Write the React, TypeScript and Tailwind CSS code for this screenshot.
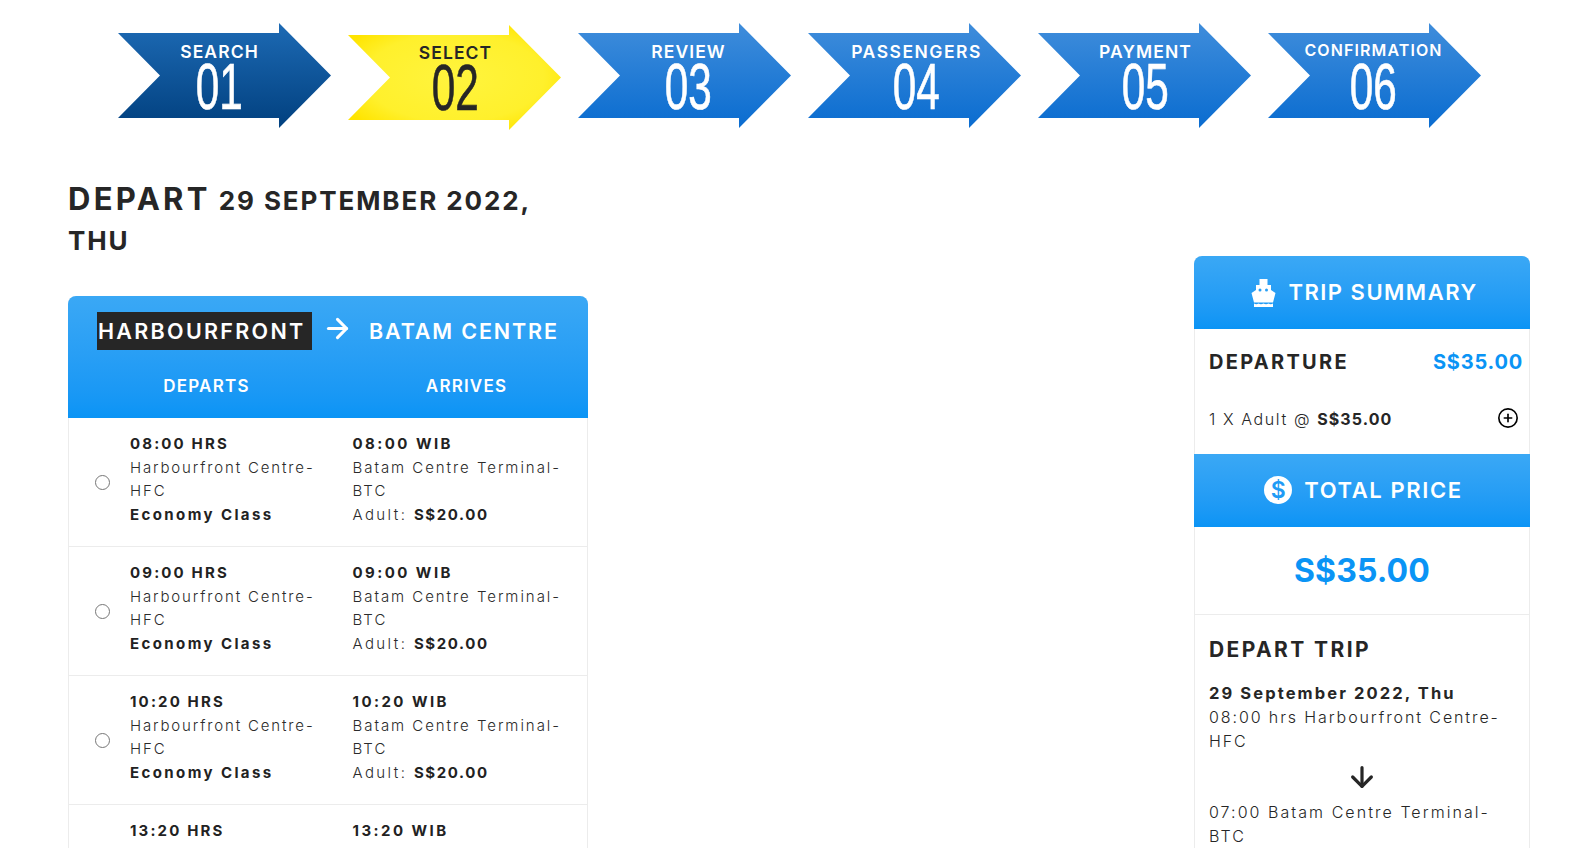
import { ArrowRight, ArrowDown, CirclePlus } from "lucide-react";

const steps = [
  { label: "SEARCH", num: "01", kind: "done", pos: "left-0 right-[10px]", size: "text-[17.5px] tracking-[1.1px]" },
  { label: "SELECT", num: "02", kind: "active", pos: "left-[2px] right-0 -mt-[1px]", size: "text-[17.5px] tracking-[1.1px]" },
  { label: "REVIEW", num: "03", kind: "todo", pos: "left-[8px] right-0", size: "text-[17.5px] tracking-[1.1px]" },
  { label: "PASSENGERS", num: "04", kind: "todo", pos: "left-[4px] right-0", size: "text-[17.5px] tracking-[1.5px]" },
  { label: "PAYMENT", num: "05", kind: "todo", pos: "left-[2px] right-0", size: "text-[17.5px] tracking-[1.1px]" },
  { label: "CONFIRMATION", num: "06", kind: "todo", pos: "left-0 right-[2px]", size: "text-[16px] tracking-[1.1px] -mt-[2px] mb-[2px]" },
];

const rows = ["08:00", "09:00", "10:20", "13:20"];

function Arrow({ label, num, kind, id, pos, size }: { label: string; num: string; kind: string; id: number; pos: string; size: string }) {
  const dark = kind === "active";
  return (
    <div className={`relative w-[213px] h-[105px] shrink-0 ${dark ? "mt-[2px]" : ""}`}>
      <svg viewBox="0 0 213 105" className="block w-[213px] h-[105px]">
        <defs>
          <linearGradient id={`g${id}`} x1="0" y1="0" x2="0" y2="1">
            {kind === "done" && <stop offset="0" stopColor="#1d6ab4" />}
            {kind === "done" && <stop offset="1" stopColor="#01407f" />}
            {kind === "todo" && <stop offset="0" stopColor="#3f8ddb" />}
            {kind === "todo" && <stop offset="1" stopColor="#0a6cd0" />}
          </linearGradient>
          <radialGradient id={`y${id}`} cx="0.5" cy="0.5" r="0.6">
            <stop offset="0" stopColor="#fff43e" />
            <stop offset="0.7" stopColor="#fff02c" />
            <stop offset="1" stopColor="#ffe400" />
          </radialGradient>
        </defs>
        <polygon
          points="0,10 161,10 161,0 213,52.5 161,105 161,95 0,95 42,52.5"
          fill={dark ? `url(#y${id})` : `url(#g${id})`}
        />
      </svg>
      <div className={`absolute top-[19px] flex flex-col items-center ${pos} ${dark ? "text-[#262626]" : "text-white"}`}>
        <span className={`font-semibold leading-[20px] whitespace-nowrap ${size}`}>{label}</span>
        <span className="font-['Liberation_Sans',sans-serif] text-[65px] leading-[50px] scale-x-[0.65] [-webkit-text-stroke:0.7px_currentColor]">{num}</span>
      </div>
    </div>
  );
}

function Row({ time }: { time: string }) {
  return (
    <div className="flex border-b border-[#ececec] h-[129px] pt-[14px] items-start">
      <div className="w-[61px] h-[101px] flex items-center justify-center pl-[6px] shrink-0">
        <input type="radio" name="dep" className="w-[15px] h-[15px] m-0" />
      </div>
      <div className="w-[222.5px] shrink-0 text-[15px] leading-[23.5px] tracking-[1.85px] text-[#2b2b2b] font-light">
        <div className="font-bold text-[#222] tracking-[2.15px]">{time} HRS</div>
        <div>Harbourfront Centre-<br />HFC</div>
        <div className="font-bold text-[#222] tracking-[2.4px]">Economy Class</div>
      </div>
      <div className="flex-1 text-[15px] leading-[23.5px] tracking-[1.95px] text-[#2b2b2b] font-light">
        <div className="font-bold text-[#222] tracking-[2.45px]">{time} WIB</div>
        <div>Batam Centre Terminal-<br />BTC</div>
        <div className="tracking-[2.4px]">Adult: <span className="font-bold text-[#222] tracking-[1.6px]">S$20.00</span></div>
      </div>
    </div>
  );
}

export default function App() {
  return (
    <div className="h-screen overflow-hidden bg-white font-['Inter',sans-serif] text-[#262626]">
      <div className="flex gap-[17px] pl-[118px] pt-[23px]">
        {steps.map((s, i) => (
          <Arrow key={s.label} id={i} {...s} />
        ))}
      </div>
      <div className="flex justify-between pl-[68px] pr-[55px] mt-[10px]">
        <div className="w-[520px] shrink-0">
          <h1 className="mt-[39px] w-[480px] font-bold text-[#262626] text-[26px] leading-[39.5px] tracking-[1.9px]">
            <span className="text-[31px] tracking-[3.3px]">DEPART</span> 29 SEPTEMBER 2022, THU
          </h1>
          <div className="mt-[36px] border-x border-[#ececec] rounded-t-lg">
            <div className="-mx-px rounded-t-lg bg-gradient-to-b from-[#3aa8f5] to-[#0a94f5] h-[122px] text-white">
              <div className="flex items-center pt-[16px] pl-[29px]">
                <span className="bg-[#262626] h-[38px] w-[215px] flex items-center pl-[1px] text-[21.5px] font-semibold tracking-[2.3px]">HARBOURFRONT</span>
                <ArrowRight className="ml-[10px] w-[31px] h-[31px] -mt-[5px]" strokeWidth={2.4} />
                <span className="ml-[16px] text-[21.5px] font-semibold tracking-[1.85px]">BATAM CENTRE</span>
              </div>
              <div className="flex mt-[24px] text-[17px] font-semibold tracking-[1.2px]">
                <span className="w-[277px] text-center">DEPARTS</span>
                <span className="w-[243px] text-center">ARRIVES</span>
              </div>
            </div>
            {rows.map((t) => (
              <Row key={t} time={t} />
            ))}
          </div>
        </div>
        <div className="w-[336px] shrink-0 mt-[116px] border-x border-[#ececec] rounded-t-lg">
          <div className="-mx-px rounded-t-lg bg-gradient-to-b from-[#3aa8f5] to-[#0a94f5] h-[73px] flex items-center justify-center gap-[12px] pl-[5px] text-white">
            <svg viewBox="0 0 24 28" className="w-[25px] h-[28px]" fill="#fff">
              <path d="M8 0h8v6h3.500v5L24 14l-2.500 9.500H2.500L0 14l4.500-3V6H8z" />
              <path d="M2.500 24.500c1.500 1 3 1 4.500 0 1.600 1 3.300 1 5 0 1.700 1 3.400 1 5 0 1.500 1 3 1 4.500 0v3.500h-19z" />
              <circle cx="8.500" cy="11" r="1.500" fill="#2aa0f5" />
              <circle cx="15" cy="11" r="1.500" fill="#2aa0f5" />
            </svg>
            <span className="text-[22px] font-semibold tracking-[1.5px]">TRIP SUMMARY</span>
          </div>
          <div className="h-[125px] pl-[14px] pr-[6px]">
            <div className="flex justify-between items-center pt-[21px] font-bold">
              <span className="text-[20px] leading-[24px] tracking-[2.3px] text-[#262626]">DEPARTURE</span>
              <span className="text-[20px] leading-[24px] tracking-[0.8px] text-[#0a94f5]">S$35.00</span>
            </div>
            <div className="flex justify-between items-center mt-[33px] text-[16px] font-light tracking-[1.6px] pr-[4px]">
              <span>1 X Adult @ <span className="font-bold tracking-[1.1px]">S$35.00</span></span>
              <CirclePlus className="w-[22px] h-[22px] -mt-[2px] text-black" strokeWidth={1.8} />
            </div>
          </div>
          <div className="-mx-px bg-gradient-to-b from-[#3aa8f5] to-[#0a94f5] h-[73px] flex items-center justify-center gap-[12px] pl-[3px] text-white">
            <span className="relative w-[28px] h-[28px] rounded-full bg-white -mt-[1px]">
              <span className="absolute inset-0 flex items-center justify-center text-[23px] font-semibold text-[#1f9bf5]">$</span>
            </span>
            <span className="text-[22px] font-semibold tracking-[1.6px]">TOTAL PRICE</span>
          </div>
          <div className="h-[88px] border-b border-[#ececec] flex items-center justify-center text-[#0a94f5] font-bold text-[32px] tracking-[0.1px]">
            S$35.00
          </div>
          <div className="px-[14px] pt-[22px]">
            <div className="text-[21px] leading-[26px] font-bold tracking-[2.4px] text-[#262626]">DEPART TRIP</div>
            <div className="mt-[18px] text-[16.5px] leading-[24px] font-bold tracking-[2.1px]">29 September 2022, Thu</div>
            <div className="text-[16px] leading-[24px] font-light tracking-[1.9px]">08:00 hrs Harbourfront Centre-<br />HFC</div>
            <div className="flex justify-center mt-[8px]">
              <ArrowDown className="w-[32px] h-[32px] text-[#262626]" strokeWidth={2.4} />
            </div>
            <div className="mt-[7px] text-[16px] leading-[24px] font-light tracking-[2.05px]">07:00 Batam Centre Terminal-<br />BTC</div>
          </div>
        </div>
      </div>
    </div>
  );
}
